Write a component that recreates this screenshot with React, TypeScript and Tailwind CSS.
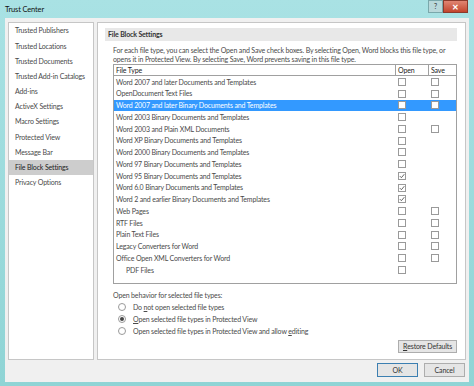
import React from 'react';

type Row = { name: string; open: boolean | null; save: boolean | null; indent?: boolean };

const navItems = [
    'Trusted Publishers',
    'Trusted Locations',
    'Trusted Documents',
    'Trusted Add-in Catalogs',
    'Add-ins',
    'ActiveX Settings',
    'Macro Settings',
    'Protected View',
    'Message Bar',
    'File Block Settings',
    'Privacy Options',
];

// null = no checkbox in that column
const rows: Row[] = [
    { name: 'Word 2007 and later Documents and Templates', open: false, save: false },
    { name: 'OpenDocument Text Files', open: false, save: false },
    { name: 'Word 2007 and later Binary Documents and Templates', open: false, save: false },
    { name: 'Word 2003 Binary Documents and Templates', open: false, save: null },
    { name: 'Word 2003 and Plain XML Documents', open: false, save: false },
    { name: 'Word XP Binary Documents and Templates', open: false, save: null },
    { name: 'Word 2000 Binary Documents and Templates', open: false, save: null },
    { name: 'Word 97 Binary Documents and Templates', open: false, save: null },
    { name: 'Word 95 Binary Documents and Templates', open: true, save: null },
    { name: 'Word 6.0 Binary Documents and Templates', open: true, save: null },
    { name: 'Word 2 and earlier Binary Documents and Templates', open: true, save: null },
    { name: 'Web Pages', open: false, save: false },
    { name: 'RTF Files', open: false, save: false },
    { name: 'Plain Text Files', open: false, save: false },
    { name: 'Legacy Converters for Word', open: false, save: false },
    { name: 'Office Open XML Converters for Word', open: false, save: false },
    { name: 'PDF Files', open: false, save: null, indent: true },
];

function Check({ checked }: { checked: boolean }) {
    return (
        <div className="w-[8px] h-[8px] border border-[#9a9a9a] bg-white flex items-center justify-center">
            {checked && (
                <svg width="6" height="6" viewBox="0 0 6 6">
                    <path d="M0.8 3.1 L2.4 4.7 L5.3 1.2" stroke="#555" strokeWidth="0.9" fill="none" />
                </svg>
            )}
        </div>
    );
}

function Radio({ checked, children }: { checked: boolean; children: React.ReactNode }) {
    return (
        <div className="flex items-center h-[12px] pl-[2px]">
            <div className="w-[8px] h-[8px] rounded-full border border-[#9a9a9a] bg-white flex items-center justify-center">
                {checked && <div className="w-[4px] h-[4px] rounded-full bg-[#444]" />}
            </div>
            <span className="ml-[7px]">{children}</span>
        </div>
    );
}

export default function App() {
    return (
        <div
            className="w-[474px] h-[386px] bg-gradient-to-b from-[#a9e2e4] to-[#8fd4d5] px-[5px] pb-[4px] flex flex-col text-[#4a4a4a] overflow-hidden whitespace-nowrap"
            style={{ fontFamily: 'Lato, "Noto Sans", sans-serif', fontSize: '7px', letterSpacing: '-0.15px' }}
        >
            {/* title bar */}
            <div className="h-[18px] flex items-start relative">
                <span className="text-[7.5px] text-[#111] mt-[4px]">Trust Center</span>
                <div className="absolute right-[1px] top-0 flex">
                    <div className="w-[15px] h-[13px] bg-[#b9d8da] border border-[#7aa8ab] text-[7px] text-[#333] flex items-center justify-center">?</div>
                    <div className="w-[25px] h-[13px] bg-gradient-to-b from-[#e08572] to-[#c2442c] border border-[#8b3a2c] text-white text-[8px] font-bold flex items-center justify-center">✕</div>
                </div>
            </div>

            {/* client area */}
            <div className="flex-1 bg-[#f0f0f0] flex flex-col pt-[4px] px-[3px]">
                <div className="flex gap-[3px] h-[338px]">
                    {/* nav */}
                    <div className="w-[86px] bg-white border border-[#c6c6c6]">
                        {navItems.map((item) => (
                            <div
                                key={item}
                                className={
                                    item === 'File Block Settings'
                                        ? 'h-[15.2px] flex items-center pl-[6px] bg-[#cdcdcd] text-[#222]'
                                        : 'h-[15.2px] flex items-center pl-[6px]'
                                }
                            >
                                {item}
                            </div>
                        ))}
                    </div>

                    {/* main */}
                    <div className="flex-1 bg-white border border-[#c6c6c6] flex flex-col pt-[5px] pl-[7px] pr-[8px]">
                        <div className="h-[13px] bg-[#e8e8e8] flex items-center pl-[3px] font-bold text-[#333]">
                            File Block Settings
                        </div>
                        <div className="pl-[8px] flex flex-col">
                            <p className="mt-[5px] leading-[9px] whitespace-normal">
                                For each file type, you can select the Open and Save check boxes. By selecting Open, Word blocks this file type, or opens it in Protected View. By selecting Save, Word prevents saving in this file type.
                            </p>
                            {/* table */}
                            <div className="h-[220px] border border-[#a0a0a0] flex flex-col">
                                <div className="h-[11px] flex border-b border-[#a0a0a0]">
                                    <div className="flex-1 pl-[2px] flex items-center text-[#222]">File Type</div>
                                    <div className="w-[33px] border-l border-[#a0a0a0] pl-[2px] flex items-center text-[#222]">Open</div>
                                    <div className="w-[28px] border-l border-[#a0a0a0] pl-[2px] flex items-center text-[#222]">Save</div>
                                </div>
                                {rows.map((r, i) => (
                                    <div
                                        key={r.name}
                                        className={i === 2 ? 'h-[11.75px] flex items-center bg-[#3399ff] text-white' : 'h-[11.75px] flex items-center'}
                                    >
                                        <div className={r.indent ? 'flex-1 pl-[12px]' : 'flex-1 pl-[2px]'}>{r.name}</div>
                                        <div className="w-[33px] pl-[3px]">{r.open !== null && <Check checked={r.open} />}</div>
                                        <div className="w-[28px] pl-[3px]">{r.save !== null && <Check checked={r.save} />}</div>
                                    </div>
                                ))}
                            </div>

                            <div className="mt-[6px] h-[11px] flex items-center">Open behavior for selected file types:</div>
                            <div className="pl-[3px] flex flex-col">
                                <Radio checked={false}>
                                    Do <span className="underline">n</span>ot open selected file types
                                </Radio>
                                <Radio checked={true}>
                                    <span className="underline">O</span>pen selected file types in Protected View
                                </Radio>
                                <Radio checked={false}>
                                    Open selected file types in Protected View and allow <span className="underline">e</span>diting
                                </Radio>
                            </div>
                            <div className="flex justify-end mt-[3px]">
                                <button className="w-[59px] h-[13px] border border-[#adadad] bg-[#e5e5e5] text-[#333] flex items-center justify-center">
                                    <span className="underline">R</span>estore Defaults
                                </button>
                            </div>
                        </div>
                    </div>
                </div>

                {/* buttons */}
                <div className="flex justify-end gap-[6px] mt-[3px] pr-[1px]">
                    <button className="w-[41px] h-[14px] border border-[#3c7fb1] bg-[#e5e5e5] text-[#333] flex items-center justify-center">OK</button>
                    <button className="w-[41px] h-[14px] border border-[#adadad] bg-[#e5e5e5] text-[#333] flex items-center justify-center">Cancel</button>
                </div>
            </div>
        </div>
    );
}
